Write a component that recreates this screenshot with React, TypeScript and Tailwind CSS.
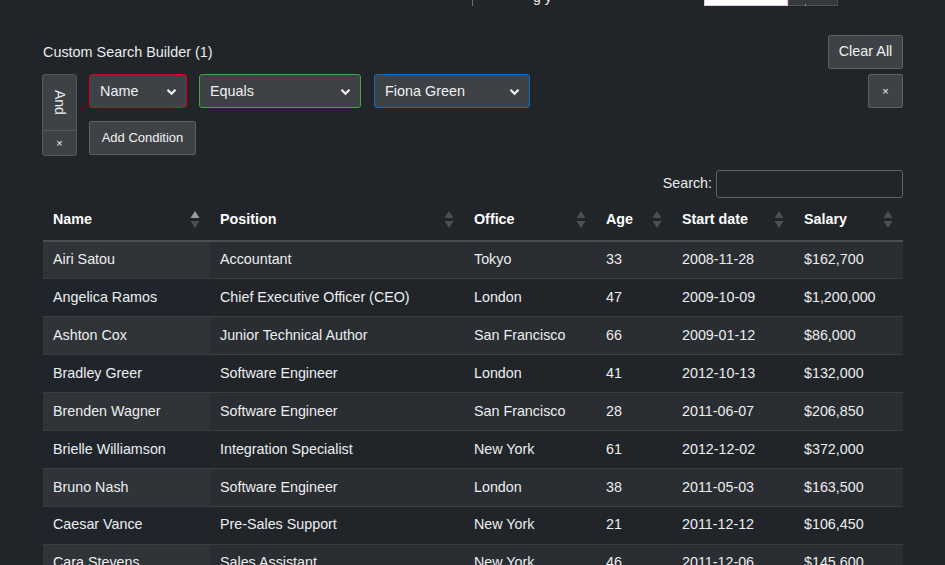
import React from "react";

type Row = [string, string, string, string, string, string];

const ROWS: Row[] = [
  ["Airi Satou", "Accountant", "Tokyo", "33", "2008-11-28", "$162,700"],
  ["Angelica Ramos", "Chief Executive Officer (CEO)", "London", "47", "2009-10-09", "$1,200,000"],
  ["Ashton Cox", "Junior Technical Author", "San Francisco", "66", "2009-01-12", "$86,000"],
  ["Bradley Greer", "Software Engineer", "London", "41", "2012-10-13", "$132,000"],
  ["Brenden Wagner", "Software Engineer", "San Francisco", "28", "2011-06-07", "$206,850"],
  ["Brielle Williamson", "Integration Specialist", "New York", "61", "2012-12-02", "$372,000"],
  ["Bruno Nash", "Software Engineer", "London", "38", "2011-05-03", "$163,500"],
  ["Caesar Vance", "Pre-Sales Support", "New York", "21", "2011-12-12", "$106,450"],
  ["Cara Stevens", "Sales Assistant", "New York", "46", "2011-12-06", "$145,600"],
];

const COLUMNS = [
  { label: "Name", width: "w-[167px]", active: true },
  { label: "Position", width: "w-[254px]", active: false },
  { label: "Office", width: "w-[132px]", active: false },
  { label: "Age", width: "w-[76px]", active: false },
  { label: "Start date", width: "w-[122px]", active: false },
  { label: "Salary", width: "w-[109px]", active: false },
];

function SortArrows({ active }: { active: boolean }) {
  return (
    <svg width="10" height="20" viewBox="0 0 10 20" className="shrink-0">
      <polygon points="5,1 9.5,8 0.5,8" fill={active ? "#9a9ca0" : "#4b4e52"} />
      <polygon points="0.5,11 9.5,11 5,18" fill="#4b4e52" />
    </svg>
  );
}

function Chevron() {
  return (
    <svg width="11" height="8" viewBox="0 0 11 8" className="shrink-0">
      <polyline points="1.5,1.8 5.5,5.8 9.5,1.8" fill="none" stroke="#f1f1f1" strokeWidth="2.2" />
    </svg>
  );
}

function FakeSelect({ value, width, border }: { value: string; width: string; border: string }) {
  return (
    <div
      className={`flex h-[34px] ${width} items-center justify-between rounded-[3px] border ${border} bg-[#3e4145] pl-[10px] pr-[9px] pt-[1px] text-[14.4px] text-[#eef0f2]`}
    >
      <span>{value}</span>
      <Chevron />
    </div>
  );
}

export default function App() {
  return (
    <div className="min-h-[565px] w-full overflow-hidden bg-[#212529] font-['Liberation_Sans',Arial,sans-serif] text-[14.3px] text-[#e9ecef]">
      {/* tail of the controls above, cut off by the viewport */}
      <div className="flex h-[6px] items-end overflow-hidden">
        <div className="w-[472px] shrink-0" />
        <div className="h-[6px] w-px bg-[#6c7075]" />
        <span className="ml-[60px] mb-[2px] text-[14px] leading-[14px] tracking-[4px] text-[#e9ecef]">gy</span>
        <div className="ml-[148px] h-[20px] w-[84px] border border-[#e8c8d8] bg-white" />
        <div className="flex h-[20px] w-[50px] justify-center border border-[#4b4e52] bg-[#34373b]">
          <div className="ml-[-14px] mt-[17px] h-[3px] w-px bg-[#9a9ca0]" />
        </div>
      </div>

      <div className="ml-[43px] w-[860px]">
        {/* search builder */}
        <div className="mt-[29px] flex items-center justify-between">
          <span className="pt-[2px] text-[14.4px] text-[#e9ecef]">Custom Search Builder (1)</span>
          <button className="h-[34px] w-[75px] rounded-[2px] border border-[#5d6064] bg-[#3e4145] text-[14.4px] text-[#f1f1f1]">
            Clear All
          </button>
        </div>

        <div className="mt-[5px] flex">
          <div className="ml-[-1px] flex h-[82px] w-[35px] shrink-0 flex-col rounded-[3px] border border-[#55585c] bg-[#3e4145] text-[#f1f1f1]">
            <div className="flex h-[56px] items-center justify-center border-b border-[#55585c]">
              <span className="text-[14px] [writing-mode:vertical-rl]">And</span>
            </div>
            <div className="flex flex-1 items-center justify-center text-[11px] leading-none">×</div>
          </div>

          <div className="ml-[12px] flex-1">
            <div className="flex items-center">
              <FakeSelect value="Name" width="w-[98px]" border="border-[#d9001b]" />
              <div className="ml-[12px]">
                <FakeSelect value="Equals" width="w-[162px]" border="border-[#3fa93f]" />
              </div>
              <div className="ml-[13px]">
                <FakeSelect value="Fiona Green" width="w-[156px]" border="border-[#0b6fc6]" />
              </div>
              <button className="ml-auto flex h-[34px] w-[35px] items-center justify-center rounded-[2px] border border-[#5d6064] bg-[#3e4145] text-[11px] text-[#f1f1f1]">
                ×
              </button>
            </div>
            <button className="mt-[13px] h-[34px] w-[107px] rounded-[2px] border border-[#5d6064] bg-[#3e4145] text-[13px] text-[#f1f1f1]">
              Add Condition
            </button>
          </div>
        </div>

        {/* search box */}
        <div className="mt-[14px] flex items-center justify-end">
          <label className="mr-[4px] text-[#e9ecef]">Search:</label>
          <div className="h-[28px] w-[187px] rounded-[3px] border border-[#5d6064]" />
        </div>

        {/* table */}
        <table className="mt-[2px] w-[860px] table-fixed border-collapse">
          <colgroup>
            {COLUMNS.map((c) => (
              <col key={c.label} className={c.width} />
            ))}
          </colgroup>
          <thead>
            <tr className="h-[41px] border-b-2 border-[#4a4d51]">
              {COLUMNS.map((c) => (
                <th key={c.label} className="px-[10px] pb-[1px] text-left font-bold text-white">
                  <div className="flex items-center justify-between">
                    <span>{c.label}</span>
                    <SortArrows active={c.active} />
                  </div>
                </th>
              ))}
            </tr>
          </thead>
          <tbody>
            {ROWS.map((r, i) => {
              const odd = i % 2 === 0;
              return (
                <tr
                  key={r[0]}
                  className={`h-[37.9px] border-b border-[#3b3d41] ${odd ? "bg-[#2a2d31]" : "bg-[#212529]"}`}
                >
                  {r.map((v, j) => (
                    <td
                      key={j}
                      className={`px-[10px] text-[#eceef0] ${
                        j === 0 ? (odd ? "bg-[#303337]" : "bg-[#1f252b]") : ""
                      }`}
                    >
                      {v}
                    </td>
                  ))}
                </tr>
              );
            })}
          </tbody>
        </table>
      </div>
    </div>
  );
}
